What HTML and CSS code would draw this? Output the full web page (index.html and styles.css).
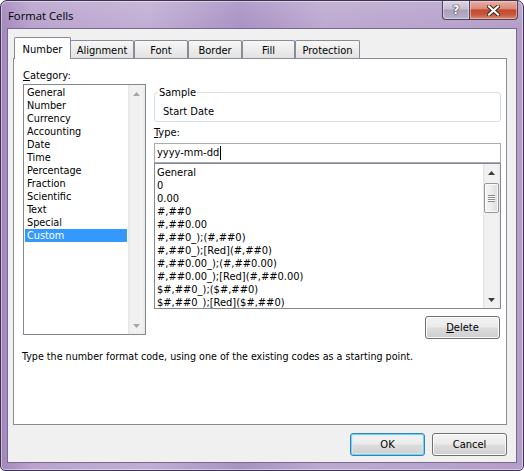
FILE: index.html
```html
<!DOCTYPE html>
<html>
<head>
<meta charset="utf-8">
<link rel="stylesheet" href="styles.css">
</head>
<body>
<div class="window">
  <div class="titlebar">
    <span class="title">Format Cells</span>
    <div class="caption-buttons">
      <div class="cbtn help">?</div>
      <div class="cbtn close">
        <svg width="13" height="11" viewBox="0 0 13 11"><path d="M2 1.5 L11 9.5 M11 1.5 L2 9.5" stroke="#3b1e1a" stroke-width="4" stroke-linecap="square"/><path d="M2 1.5 L11 9.5 M11 1.5 L2 9.5" stroke="#ffffff" stroke-width="2.2" stroke-linecap="square"/></svg>
      </div>
    </div>
  </div>
  <div class="client">
    <div class="tabs">
      <div class="tab selected t-number">Number</div>
      <div class="tab t-align">Alignment</div>
      <div class="tab t-font">Font</div>
      <div class="tab t-border">Border</div>
      <div class="tab t-fill">Fill</div>
      <div class="tab t-prot">Protection</div>
    </div>
    <div class="panel">
      <div class="columns">
        <div class="col-left">
          <div class="label"><u>C</u>ategory:</div>
          <div class="listbox cat">
            <div class="items">
              <div class="item">General</div>
              <div class="item">Number</div>
              <div class="item">Currency</div>
              <div class="item">Accounting</div>
              <div class="item">Date</div>
              <div class="item">Time</div>
              <div class="item">Percentage</div>
              <div class="item">Fraction</div>
              <div class="item">Scientific</div>
              <div class="item">Text</div>
              <div class="item">Special</div>
              <div class="item sel">Custom</div>
            </div>
            <div class="vscroll disabled">
              <div class="arrow"><svg width="7" height="4" viewBox="0 0 7 4"><polygon points="3.5,0 7,4 0,4" fill="#a6a6a6"/></svg></div>
              <div class="track"></div>
              <div class="arrow"><svg width="7" height="4" viewBox="0 0 7 4"><polygon points="0,0 7,0 3.5,4" fill="#a6a6a6"/></svg></div>
            </div>
          </div>
        </div>
        <div class="col-right">
          <fieldset class="sample">
            <legend>Sample</legend>
            <div class="sample-value">Start Date</div>
          </fieldset>
          <div class="label type-label"><u>T</u>ype:</div>
          <div class="textbox">yyyy-mm-dd<span class="caret"></span></div>
          <div class="listbox fmt">
            <div class="items">
              <div class="item">General</div>
              <div class="item">0</div>
              <div class="item">0.00</div>
              <div class="item">#,##0</div>
              <div class="item">#,##0.00</div>
              <div class="item">#,##0_);(#,##0)</div>
              <div class="item">#,##0_);[Red](#,##0)</div>
              <div class="item">#,##0.00_);(#,##0.00)</div>
              <div class="item">#,##0.00_);[Red](#,##0.00)</div>
              <div class="item">$#,##0_);($#,##0)</div>
              <div class="item">$#,##0_);[Red]($#,##0)</div>
            </div>
            <div class="vscroll">
              <div class="arrow"><svg width="7" height="4" viewBox="0 0 7 4"><polygon points="3.5,0 7,4 0,4" fill="#3c3c3c"/></svg></div>
              <div class="track">
                <div class="thumb"><span class="grip"></span></div>
              </div>
              <div class="arrow"><svg width="7" height="4" viewBox="0 0 7 4"><polygon points="0,0 7,0 3.5,4" fill="#3c3c3c"/></svg></div>
            </div>
          </div>
          <div class="btn-row"><button class="btn delete"><u>D</u>elete</button></div>
        </div>
      </div>
      <p class="hint">Type the number format code, using one of the existing codes as a starting point.</p>
    </div>
    <div class="dialog-buttons">
      <button class="btn default">OK</button>
      <button class="btn">Cancel</button>
    </div>
  </div>
</div>
</body>
</html>
```
FILE: styles.css
```css
html, body {
  margin: 0;
  padding: 0;
}
body {
  width: 524px;
  height: 471px;
  overflow: hidden;
  font-family: "DejaVu Sans Condensed", "DejaVu Sans", sans-serif;
  font-size: 11px;
  line-height: 13px;
  color: #000;
  background: #ffffff;
}
.window {
  box-sizing: border-box;
  width: 524px;
  height: 471px;
  border: 1px solid #3d3350;
  border-radius: 7px 7px 5px 5px;
  background:
    linear-gradient(to bottom, rgba(255,255,255,0.12), rgba(255,255,255,0) 28px),
    linear-gradient(to right, #a287bd 0, #b9a3cd 6%, #c1aed4 28%, #a892c3 46%, #bda9d0 62%, #b49ec9 100%);
  box-shadow: inset 0 0 0 1px rgba(255,255,255,0.45);
  display: flex;
  flex-direction: column;
}
.titlebar {
  height: 27px;
  display: flex;
  justify-content: space-between;
  align-items: flex-start;
  padding-left: 7px;
}
.title {
  font-family: "Open Sans", sans-serif;
  font-size: 11.3px;
  line-height: 15px;
  margin-top: 7px;
  color: #000;
}
.caption-buttons {
  display: flex;
  margin-right: 5px;
}
.cbtn {
  box-sizing: border-box;
  height: 19px;
  display: flex;
  align-items: center;
  justify-content: center;
  border: 1px solid #4d4160;
  border-top: none;
}
.help {
  width: 28px;
  border-radius: 0 0 0 4px;
  background: linear-gradient(to bottom, #dcd5e4 0%, #c6bdd3 45%, #aa9fbc 50%, #b9b0c8 100%);
  box-shadow: inset 0 0 0 1px rgba(255,255,255,0.4);
  color: #ffffff;
  font-family: "DejaVu Sans", sans-serif;
  font-weight: bold;
  font-size: 12px;
  line-height: 14px;
  text-shadow: 0 0 1px #2a2a2a, 0 0 1px #2a2a2a, 0 0 1px #2a2a2a;
}
.close {
  width: 48px;
  border-left: none;
  border-radius: 0 0 4px 0;
  background: linear-gradient(to bottom, #eab0a2 0%, #d98a78 42%, #c4492f 50%, #c8563c 75%, #dc8a6c 100%);
  box-shadow: inset 0 0 0 1px rgba(255,220,210,0.5);
}
.client {
  box-sizing: border-box;
  height: 435px;
  margin: 0 6px 7px 6px;
  border: 1px solid #76698b;
  background: #f0f0f0;
  padding: 8px 9px 0 5px;
}
.tabs {
  display: flex;
  align-items: flex-end;
  height: 21px;
  padding-left: 1px;
}
.tab {
  box-sizing: border-box;
  height: 18px;
  border: 1px solid #898c95;
  border-bottom: none;
  border-radius: 2px 2px 0 0;
  background: linear-gradient(to bottom, #f7f7f7 0%, #ececec 50%, #e2e2e2 100%);
  text-align: center;
  padding-top: 3px;
}
.tab.selected {
  height: 22px;
  margin-bottom: -1px;
  background: #ffffff;
  padding-top: 5px;
  position: relative;
  z-index: 2;
}
.t-number { width: 57px; }
.t-align { width: 64px; margin-left: -1px; }
.t-font { width: 54px; }
.t-border { width: 54px; }
.t-fill { width: 53px; }
.t-prot { width: 65px; }
.panel {
  box-sizing: border-box;
  height: 367px;
  border: 1px solid #898c95;
  background: #ffffff;
  padding: 10px 5px 0 9px;
}
.columns {
  display: flex;
  gap: 8px;
  align-items: flex-start;
}
.col-left {
  width: 123px;
  display: flex;
  flex-direction: column;
}
.col-right {
  width: 347px;
  margin-top: 17px;
  display: flex;
  flex-direction: column;
}
.label {
  height: 13px;
}
.listbox {
  box-sizing: border-box;
  border: 1px solid #828790;
  background: #ffffff;
  display: flex;
  overflow: hidden;
}
.listbox .items {
  flex: 1;
  overflow: hidden;
  padding-top: 1px;
}
.listbox .item {
  height: 13px;
  white-space: nowrap;
  padding-left: 2px;
}
.listbox.cat .item {
  font-size: 10.8px;
}
.listbox.cat {
  margin-top: 2px;
  height: 251px;
}
.listbox.cat .items {
  padding-left: 1px;
  padding-right: 1px;
}
.listbox.cat .item.sel {
  background: #3399ff;
  color: #ffffff;
}
.listbox.fmt {
  height: 146px;
}
.listbox.fmt .items {
  padding-top: 2px;
}
.vscroll {
  width: 17px;
  display: flex;
  flex-direction: column;
  background: linear-gradient(to right, #e4e4e4 0, #f1f1f1 15%, #f1f1f1 85%, #e8e8e8 100%);
}
.vscroll .arrow {
  height: 17px;
  display: flex;
  align-items: center;
  justify-content: center;
}
.vscroll .track {
  flex: 1;
}
.thumb {
  box-sizing: border-box;
  margin: 2px 1px 0 1px;
  height: 30px;
  border: 1px solid #979797;
  border-radius: 2px;
  background: linear-gradient(to right, #f5f5f5 0%, #ececec 50%, #dcdcdc 100%);
  box-shadow: inset 0 0 0 1px rgba(255,255,255,0.8);
  display: flex;
  align-items: center;
  justify-content: center;
}
.grip {
  display: block;
  width: 7px;
  height: 7px;
  background: repeating-linear-gradient(to bottom, #8a8a8a 0, #8a8a8a 1px, #fdfdfd 1px, #fdfdfd 2px);
}
fieldset.sample {
  margin: 0;
  padding: 0 4px 3px 3px;
  border: 1px solid #d5dfe5;
  border-radius: 3px;
  min-inline-size: 0;
}
fieldset.sample legend {
  padding: 0 1px;
  line-height: 13px;
}
.sample-value {
  margin-top: 6px;
  padding-left: 5px;
  height: 13px;
}
.type-label {
  margin-top: 4px;
}
.textbox {
  box-sizing: border-box;
  margin-top: 4px;
  height: 20px;
  border: 1px solid #a6acb4;
  background: #ffffff;
  padding-left: 2px;
  line-height: 18px;
  display: flex;
  align-items: center;
}
.caret {
  display: inline-block;
  width: 1px;
  height: 14px;
  background: #000;
  margin-left: 1px;
}
.btn-row {
  display: flex;
  justify-content: flex-end;
  margin-top: 7px;
  padding-right: 1px;
}
.btn {
  box-sizing: border-box;
  width: 75px;
  height: 23px;
  padding: 0;
  margin: 0;
  font-family: "DejaVu Sans Condensed", "DejaVu Sans", sans-serif;
  font-size: 11px;
  line-height: 13px;
  color: #000;
  border: 1px solid #707070;
  border-radius: 3px;
  background: linear-gradient(to bottom, #f3f3f3 0%, #ebebeb 48%, #dddddd 52%, #cfcfcf 100%);
  box-shadow: inset 0 0 0 1px #fbfbfb;
}
.btn.default {
  border-color: #3c7fb1;
  box-shadow: inset 0 0 0 1px #6fd2f7, inset 0 0 0 2px rgba(200,240,255,0.6);
}
.hint {
  margin: 11px 0 0 -1px;
  height: 13px;
  white-space: nowrap;
  font-size: 10.65px;
}
.dialog-buttons {
  display: flex;
  justify-content: flex-end;
  gap: 7px;
  margin-top: 8px;
}
```
